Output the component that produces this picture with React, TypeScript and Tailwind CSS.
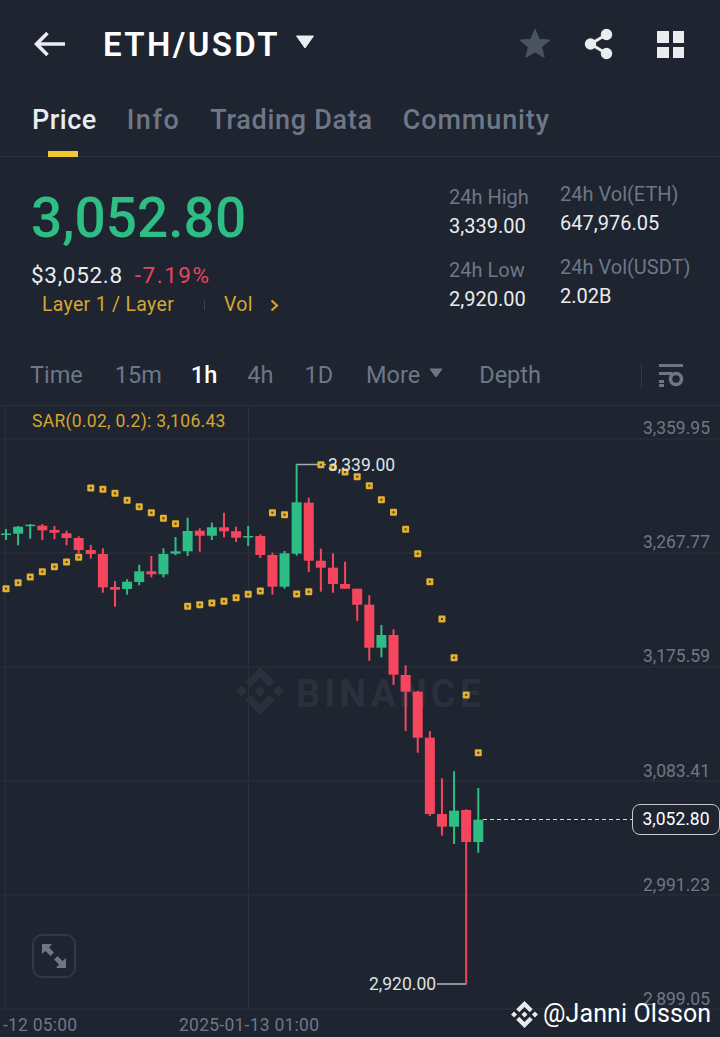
import React from 'react'

const GREEN = '#2ebd85'
const RED = '#f6465d'
const SAR_YELLOW = '#e3b02f'

// color, wick top, body top, body bottom, wick bottom
type Candle = [string, number, number, number, number]

const candles: Candle[] = [
  ['g', 529, 533.5, 535, 540],
  ['g', 526, 526.7, 533.7, 545.3],
  ['g', 524, 524.7, 526, 538.7],
  ['r', 524, 525.7, 530.3, 540],
  ['r', 526, 530, 532.7, 539.3],
  ['r', 530.7, 533.3, 538, 545.3],
  ['r', 536.3, 538, 550, 553.3],
  ['r', 545, 550, 554, 558.7],
  ['r', 548.3, 554, 587.3, 592.7],
  ['r', 581, 587, 589.7, 606.7],
  ['g', 579.3, 581.7, 589, 594.7],
  ['g', 564.7, 571.3, 582, 585.3],
  ['r', 556, 571.3, 574.3, 577.3],
  ['g', 548.3, 554, 574.3, 577.3],
  ['g', 537, 551.3, 553.7, 555.3],
  ['g', 517.7, 531, 551.3, 556],
  ['r', 528.3, 530.7, 535.7, 551.7],
  ['g', 522.7, 527.3, 535.7, 540],
  ['r', 512.7, 527.3, 531.3, 537.3],
  ['r', 526.7, 531.3, 537.7, 542],
  ['g', 526, 536, 537.3, 546],
  ['r', 534.3, 536, 555, 558],
  ['r', 552.7, 555, 586.7, 594.7],
  ['g', 551, 553.3, 586.7, 588.7],
  ['g', 464.3, 502.3, 553.7, 555.7],
  ['r', 497.7, 502.7, 560.7, 572],
  ['r', 548.7, 560.7, 567.7, 591.7],
  ['r', 553.3, 567.7, 584, 592.7],
  ['r', 561.7, 584, 588.7, 588.7],
  ['r', 588.7, 588.7, 604.7, 621],
  ['r', 595.3, 604.7, 647.7, 660.7],
  ['g', 625, 635, 647.7, 657.3],
  ['r', 629.3, 635, 674.7, 685],
  ['r', 665.3, 675, 691.7, 731],
  ['r', 690.7, 691.7, 737.7, 752.7],
  ['r', 731, 737.7, 814, 816],
  ['r', 778.3, 814, 826.7, 835.7],
  ['g', 771.3, 810.7, 826.7, 844],
  ['r', 809.3, 810, 842, 984],
  ['g', 788, 819.7, 842, 852.7],
]

const sar = [
  588.7, 582.7, 577, 571.7, 566.7, 562, 557.3, 488, 489.3, 493.3, 500.3, 506.7, 512.7, 518.3,
  523.7, 606.3, 604.7, 603, 601.3, 597.7, 594.3, 591, 512.7, 514.7, 594, 591.7, 464.7, 467.3, 472,
  476.7, 485.7, 499.7, 512.3, 529.3, 553.7, 581.7, 619, 657.7, 695, 752.7,
]

const xAt = (i: number) => 6 + i * 12.11

const BINANCE_PATH =
  'M16.624 13.9202l2.7175 2.7154-7.353 7.353-7.353-7.352 2.7175-2.7164 4.6355 4.6595 4.6356-4.6595zm4.6366-4.6366L24 12l-2.7154 2.7164L18.5682 12l2.6924-2.7164zm-9.272.001l2.7163 2.6914-2.7164 2.7174v-.001L9.2721 12l2.7164-2.7154zm-9.2722-.001L5.4088 12l-2.6914 2.6924L0 12l2.7164-2.7164zM11.9885.0115l7.353 7.329-2.7174 2.7154-4.6356-4.6356-4.6355 4.6595-2.7174-2.7154 7.353-7.353z'

function Header() {
  return (
    <div className="flex h-[88px] items-center pl-[34px] pr-[36px]">
      <svg width="32" height="26" viewBox="0 0 32 26" fill="none" stroke="#eaecef" strokeWidth="3.6">
        <path d="M31 13H3M13.5 2 2.5 13l11 11" />
      </svg>
      <span className="ml-[37px] text-[33px] font-semibold leading-none tracking-[2.4px] text-white">
        ETH/USDT
      </span>
      <svg className="ml-[15px] mt-[-4px]" width="20" height="14" viewBox="0 0 20 14">
        <path d="M1.5 1h17L10 13z" fill="#eaecef" stroke="#eaecef" strokeLinejoin="round" />
      </svg>
      <svg className="ml-auto" width="32" height="32" viewBox="0 0 24 24">
        <path
          d="M12 1.2l3 7.3 7.8.6-6 5 1.9 7.6L12 17.8l-6.7 3.9 1.9-7.6-6-5 7.8-.6z"
          fill="#4a5362"
          stroke="#4a5362"
          strokeLinejoin="round"
        />
      </svg>
      <svg className="ml-[33px]" width="30" height="32" viewBox="0 0 30 32" fill="#eaecef">
        <circle cx="22.5" cy="6.5" r="5.7" />
        <circle cx="6.5" cy="16" r="5.7" />
        <circle cx="22.5" cy="25.5" r="5.7" />
        <path d="M6.5 16 22.5 6.5M6.5 16l16 9.5" stroke="#eaecef" strokeWidth="3" />
      </svg>
      <div className="ml-[43px] grid w-[27px] grid-cols-2 gap-[4px]">
        <div className="h-[12px] bg-[#eaecef]" />
        <div className="h-[12px] bg-[#eaecef]" />
        <div className="h-[11px] bg-[#eaecef]" />
        <div className="h-[11px] bg-[#eaecef]" />
      </div>
    </div>
  )
}

function Tabs() {
  return (
    <div className="relative flex h-[69px] gap-[30px] border-b border-[#2b313c] pl-[32px] pt-[14px] text-[27px] font-medium leading-[36px] text-[#6f7787]">
      <span className="tracking-[0.5px] text-[#eaecef]">Price</span>
      <span className="tracking-[1.5px]">Info</span>
      <span className="tracking-[0.7px]">Trading Data</span>
      <span className="tracking-[0.9px]">Community</span>
      <div className="absolute bottom-[-1px] left-[48px] h-[6px] w-[30px] bg-[#f0c92e]" />
    </div>
  )
}

function Stat({ label, value, className }: { label: string; value: string; className?: string }) {
  return (
    <div className={className}>
      <div className="text-[20px] leading-[26px] text-[#6f7787]">{label}</div>
      <div className="mt-[3px] text-[20px] leading-[26px] text-[#eaecef]">{value}</div>
    </div>
  )
}

function Summary() {
  return (
    <div className="flex h-[199px] pl-[31px]">
      <div className="w-[418px]">
        <div className="mt-[28px] text-[55px] font-medium leading-[66px] text-[#2ebd85]">3,052.80</div>
        <div className="mt-[10px] flex gap-[12px] text-[22.5px] leading-[28px]">
          <span className="tracking-[0.7px] text-[#eaecef]">$3,052.8</span>
          <span className="tracking-[1.5px] text-[#e8455f]">-7.19%</span>
        </div>
        <div className="mt-[2px] flex items-center pl-[11px] text-[19.5px] leading-[28px] tracking-[0.3px] text-[#d5a62f]">
          <span>Layer 1 / Layer</span>
          <div className="ml-[30px] h-[10px] w-px bg-[#3d4450]" />
          <span className="ml-[19px]">Vol</span>
          <svg className="ml-[17px]" width="9" height="13" viewBox="0 0 9 13" fill="none" stroke="#d5a62f" strokeWidth="2.2">
            <path d="M1.5 1.5 7 6.5l-5.5 5" />
          </svg>
        </div>
      </div>
      <div className="w-[111px] pt-[27px]">
        <Stat label="24h High" value="3,339.00" />
        <Stat label="24h Low" value="2,920.00" className="mt-[18px]" />
      </div>
      <div className="pt-[24px]">
        <Stat label="24h Vol(ETH)" value="647,976.05" />
        <Stat label="24h Vol(USDT)" value="2.02B" className="mt-[18px]" />
      </div>
    </div>
  )
}

function Timeframes() {
  return (
    <div className="flex h-[50px] items-center border-b border-[#2b313c] pb-[10px] pl-[30px] text-[23.5px] text-[#6f7787]">
      <span>Time</span>
      <span className="ml-[32px]">15m</span>
      <span className="ml-[29px] font-medium text-white">1h</span>
      <span className="ml-[30px]">4h</span>
      <span className="ml-[31px]">1D</span>
      <span className="ml-[33px]">More</span>
      <svg className="ml-[9px] mb-[5px]" width="14" height="10" viewBox="0 0 14 10">
        <path d="M1 1h12L7 9z" fill="#6f7787" stroke="#6f7787" strokeLinejoin="round" />
      </svg>
      <span className="ml-[36px]">Depth</span>
      <div className="ml-[100px] h-[24px] w-px bg-[#333a46]" />
      <svg className="ml-[17px]" width="25" height="23" viewBox="0 0 25 23" fill="#6f7787">
        <rect x="0" y="0" width="24" height="3" />
        <rect x="0" y="8" width="13" height="3" />
        <rect x="0" y="16" width="5" height="3" />
        <rect x="0" y="20" width="5" height="3" />
        <circle cx="17" cy="15" r="5.5" fill="none" stroke="#6f7787" strokeWidth="3.5" />
      </svg>
    </div>
  )
}

function Chart() {
  const gridY = [439, 553, 667, 781, 895, 1009]
  return (
    <svg className="absolute inset-0" width="720" height="631" viewBox="0 406 720 631">
      {gridY.map((y) => (
        <line key={y} x1="0" x2="720" y1={y} y2={y} stroke="#2b313c" />
      ))}
      <line x1="5" x2="5" y1="405" y2="1009" stroke="#2b313c" />
      <line x1="248.5" x2="248.5" y1="405" y2="1009" stroke="#2b313c" />
      <g transform="translate(236 667) scale(2)" fill="#2b313c">
        <path d={BINANCE_PATH} />
      </g>
      <path d="M297 465V464.5H326" fill="none" stroke="#a9afb8" strokeWidth="1.6" />
      <path d="M437 984H466.5" fill="none" stroke="#a9afb8" strokeWidth="1.6" />
      {candles.map(([c, wt, bt, bb, wb], i) => {
        const x = xAt(i)
        const fill = c === 'g' ? GREEN : RED
        return (
          <g key={i} fill={fill}>
            <rect x={x - 1} y={wt} width="2" height={wb - wt} />
            <rect x={x - 5} y={bt} width="10" height={Math.max(bb - bt, 1.5)} />
          </g>
        )
      })}
      {sar.map((y, i) => (
        <g key={i}>
          <rect x={xAt(i) - 3.5} y={y - 3.5} width="7" height="7" rx="1" fill={SAR_YELLOW} />
          <rect x={xAt(i) - 1} y={y - 1} width="2" height="2" fill="#4a3d1c" />
        </g>
      ))}
      <line x1="483" x2="632" y1="819.5" y2="819.5" stroke="#d5d8dc" strokeDasharray="4 3" />
    </svg>
  )
}

function AxisLabel({ children, className }: { children: React.ReactNode; className: string }) {
  return <div className={`absolute whitespace-nowrap text-[17.5px] leading-[22px] ${className}`}>{children}</div>
}

function ChartArea() {
  return (
    <div className="relative h-[631px] overflow-hidden">
      {/* watermark sits under the candles */}
      <div className="absolute left-[296px] top-[266px] text-[38px] font-bold leading-[44px] tracking-[4px] text-[#2b313c]">
        BINANCE
      </div>
      <Chart />
      <AxisLabel className="left-[32px] top-[4px] tracking-[0.3px] text-[#d5a62f]">SAR(0.02, 0.2): 3,106.43</AxisLabel>
      <AxisLabel className="right-[10px] top-[11px] text-[#6f7787]">3,359.95</AxisLabel>
      <AxisLabel className="right-[10px] top-[125px] text-[#6f7787]">3,267.77</AxisLabel>
      <AxisLabel className="right-[10px] top-[239px] text-[#6f7787]">3,175.59</AxisLabel>
      <AxisLabel className="right-[10px] top-[354px] text-[#6f7787]">3,083.41</AxisLabel>
      <AxisLabel className="right-[10px] top-[468px] text-[#6f7787]">2,991.23</AxisLabel>
      <AxisLabel className="right-[10px] top-[582px] text-[#6f7787]">2,899.05</AxisLabel>
      <AxisLabel className="left-[328px] top-[48px] text-[#dfe2e6]">3,339.00</AxisLabel>
      <AxisLabel className="left-[369px] top-[567px] text-[#dfe2e6]">2,920.00</AxisLabel>
      <div className="absolute left-[632px] top-[398px] flex h-[31px] w-[88px] items-center justify-center rounded-[8px] border border-[#c5c9cf] bg-[#1e2430] text-[17.5px] text-white">
        3,052.80
      </div>
      <div className="absolute left-[32px] top-[528px] flex h-[44px] w-[44px] items-center justify-center rounded-[10px] border-2 border-[#333a46]">
        <svg width="26" height="26" viewBox="0 0 26 26" fill="#6f7787">
          <path d="M1 1h10L8 4.5l5 5-3.5 3.5-5-5L1 11z" />
          <path d="M25 25H15l3-3.5-5-5 3.5-3.5 5 5 3.5-3z" />
        </svg>
      </div>
      <AxisLabel className="left-[3px] top-[608px] tracking-[0.2px] text-[#6f7787]">-12 05:00</AxisLabel>
      <AxisLabel className="left-[179px] top-[608px] tracking-[0.25px] text-[#6f7787]">2025-01-13 01:00</AxisLabel>
      <div className="absolute left-[511px] top-[594px] flex items-center gap-[5px]">
        <svg width="27" height="27" viewBox="0 0 24 24" fill="#e8eaed">
          <path d={BINANCE_PATH} />
        </svg>
        <span className="text-[25px] leading-[28px] tracking-[0.1px] text-white">@Janni Olsson</span>
      </div>
    </div>
  )
}

export default function App() {
  return (
    <div className="h-[1037px] w-[720px] overflow-hidden bg-[#1e2430] font-['Roboto',sans-serif]">
      <Header />
      <Tabs />
      <Summary />
      <Timeframes />
      <ChartArea />
    </div>
  )
}
